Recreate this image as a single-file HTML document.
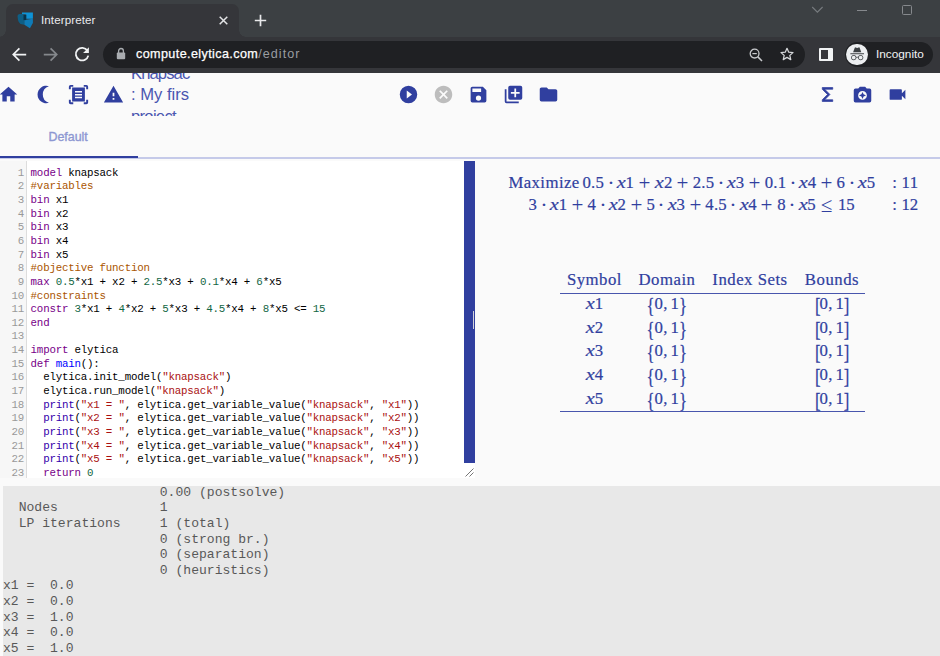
<!DOCTYPE html>
<html lang="en">
<head>
<meta charset="utf-8">
<title>Interpreter</title>
<style>
*{box-sizing:border-box;margin:0;padding:0}
html,body{width:940px;height:656px;overflow:hidden;background:#fafafa;font-family:"Liberation Sans",sans-serif}
.abs{position:absolute}
#stage{position:relative;width:940px;height:656px;overflow:hidden;background:#fafafa}
/* ---------- browser chrome ---------- */
#frame{left:0;top:0;width:940px;height:37px;background:#3c4043}
#tab{left:6px;top:4px;width:232.6px;height:34px;background:#35363a;border-radius:7px 7px 0 0}
#tabL{left:-1px;top:30px;width:7px;height:7px;background:radial-gradient(circle at 0 0,transparent 6.5px,#35363a 7px)}
#tabR{left:238.6px;top:30px;width:7px;height:7px;background:radial-gradient(circle at 100% 0,transparent 6.5px,#35363a 7px)}
#tabtitle{left:41px;top:13px;font-size:11.6px;line-height:14px;color:#e8eaed;letter-spacing:.1px;white-space:nowrap}
#toolbar{left:0;top:37px;width:940px;height:36px;background:#35363a}
#omni{left:103px;top:41px;width:702px;height:27px;border-radius:14px;background:#1f2023}
#url{left:136px;top:46.3px;font-size:12.6px;line-height:17px;color:#fff;white-space:nowrap;letter-spacing:.39px;-webkit-text-stroke:.25px #fff}
#url span{color:#9a9da1;letter-spacing:1.05px;-webkit-text-stroke:0}
#incog{left:845px;top:42px;width:88px;height:25px;border-radius:13px;background:#1f2023}
#incogtxt{left:876px;top:47px;font-size:11.8px;line-height:15px;color:#f1f3f4;white-space:nowrap}
/* ---------- app ---------- */
.ic{position:absolute;width:21px;height:21px;fill:#303f9f}
#title{left:131px;top:73px;width:62px;height:43px;overflow:hidden;color:#4a56b0;font-size:16.6px;line-height:21.3px;white-space:nowrap;letter-spacing:-.35px}
#title div{position:relative;top:-10px}
#tabtxt{left:48.5px;top:129px;font-size:12.4px;line-height:16px;color:#8d97d2;-webkit-text-stroke:.35px #8d97d2;white-space:nowrap}
#tabline{left:0;top:157.3px;width:940px;height:1.3px;background:#c5cae9}
#tabsel{left:0;top:155.8px;width:138px;height:2.2px;background:#303f9f}
/* editor */
#editor{left:0;top:161px;width:475px;height:317px;background:#fff;overflow:hidden}
#gutter{left:0;top:0;width:27px;height:317px;background:#f7f7f7;border-right:1px solid #ddd}
#bar{left:464px;top:161px;width:11px;height:302px;background:#303f9f}
#handle{left:473.2px;top:311px;width:1.2px;height:18px;background:#d4d4d8}
.ln{position:absolute;left:0;width:24px;text-align:right;color:#999;font:10.8px/13.64px "Liberation Mono",monospace;letter-spacing:-.21px;white-space:pre}
.cl{position:absolute;left:30.6px;color:#000;font:10.8px/13.64px "Liberation Mono",monospace;letter-spacing:-.21px;white-space:pre}
.k{color:#770088}.c{color:#aa5500}.n{color:#116644}.s{color:#aa1111}.d{color:#0000ff}.b{color:#3300aa}
/* output */
#out{left:3px;top:485.6px;width:937px;height:171px;background:#e8e8e8}
#outtxt{left:0;top:-.9px;color:#585858;font:13.07px/15.62px "Liberation Mono",monospace;white-space:pre}
#fade{left:0;top:478px;width:940px;height:7px;background:#fafafa}
/* math */
.m{position:absolute;color:#303f9f;font-family:"Liberation Serif",serif;font-size:16.75px;line-height:20px;white-space:nowrap}
.m{-webkit-text-stroke:.2px #303f9f}
.m i{font-style:italic;display:inline-block;transform:translateX(.4px) scaleX(1.2)}
.t.p{transform:translateY(1px) scale(1.26);transform-origin:50% 62%;-webkit-text-stroke:0}
.t.br{transform:translateY(1.2px) scaleY(1.3);transform-origin:50% 58%}
.t.cd{transform:scale(1.15);transform-origin:50% 66%}
.t{display:inline-block;text-align:center;white-space:nowrap;height:1em;vertical-align:top}
.hl{left:560.2px;width:304.4px;height:1px;background:#4855ad}
</style>
</head>
<body>
<div id="stage">
<div class="abs" id="frame"></div>
<div class="abs" id="tab"></div><div class="abs" id="tabL"></div><div class="abs" id="tabR"></div>
<svg class="abs" style="left:17px;top:11px" width="17" height="18" viewBox="0 0 17 18">
 <path d="M0.5 4.8 Q1 3.1 2.7 3.1 H6.1 L7.8 4.8 L7.4 13.8 L3.5 12.9 Q1.4 11.4 1 9.1 Z" fill="#0e5f86"/>
 <path d="M5 1.4 H15.9 V7.8 H9.3 V3.5 L5 2.9 Z" fill="#0e93d6"/>
 <path d="M7.4 9.1 L15.9 7.8 V12.1 L12.9 17.2 L7.4 13.8 Z" fill="#0f7cb8"/>
 <path d="M6.5 4 H9.1 V9.1 H6.5 Z" fill="#07344b"/>
</svg>
<div class="abs" id="tabtitle">Interpreter</div>
<svg class="abs" style="left:218px;top:15px" width="11" height="11" viewBox="0 0 11 11"><path d="M1.7 1.7 L9.3 9.3 M9.3 1.7 L1.7 9.3" stroke="#e3e4e6" stroke-width="1.5" fill="none"/></svg>
<svg class="abs" style="left:254px;top:14px" width="13" height="13" viewBox="0 0 13 13"><path d="M6.5 0.8 V12.2 M0.8 6.5 H12.2" stroke="#e8e9eb" stroke-width="1.7" fill="none"/></svg>
<svg class="abs" style="left:811px;top:6px" width="13" height="8" viewBox="0 0 13 8"><path d="M1.2 1 L6.4 6.2 L11.6 1" stroke="#777b7f" stroke-width="1.1" fill="none"/></svg>
<div class="abs" style="left:857px;top:9.5px;width:10px;height:1px;background:#86898d"></div>
<div class="abs" style="left:902px;top:5px;width:10px;height:10px;border:1px solid #86898d;border-radius:1.5px"></div>
<div class="abs" id="toolbar"></div>
<svg class="abs" style="left:11px;top:46px" width="17" height="17" viewBox="0 0 17 17"><path d="M15.2 8.5 H2.6 M8.4 2.4 L2.3 8.5 L8.4 14.6" stroke="#f1f3f4" stroke-width="1.75" fill="none"/></svg>
<svg class="abs" style="left:42px;top:46px" width="17" height="17" viewBox="0 0 17 17"><path d="M1.8 8.5 H14.4 M8.6 2.4 L14.7 8.5 L8.6 14.6" stroke="#85888c" stroke-width="1.75" fill="none"/></svg>
<svg class="abs" style="left:73px;top:45px" width="18" height="18" viewBox="0 0 18 18"><path d="M14.4 5.6 A6.3 6.3 0 1 0 15.3 10.6" stroke="#f1f3f4" stroke-width="1.8" fill="none"/><path d="M15.9 2.2 V8 H10.1 Z" fill="#f1f3f4"/></svg>
<div class="abs" id="omni"></div>
<svg class="abs" style="left:116px;top:47px" width="10" height="13" viewBox="0 0 10 13"><path d="M2.6 6 V3.9 A2.4 2.4 0 0 1 7.4 3.9 V6" stroke="#a9acb0" stroke-width="1.3" fill="none"/><rect x="0.8" y="5.6" width="8.4" height="6.6" rx="1" fill="#a9acb0"/></svg>
<div class="abs" id="url">compute.elytica.com<span>/editor</span></div>
<svg class="abs" style="left:749px;top:48px" width="14" height="14" viewBox="0 0 14 14"><circle cx="5.6" cy="5.6" r="4.4" stroke="#c9cbce" stroke-width="1.3" fill="none"/><path d="M8.9 8.9 L13 13" stroke="#c9cbce" stroke-width="1.5"/><path d="M3.4 5.6 H7.8" stroke="#c9cbce" stroke-width="1.2"/></svg>
<svg class="abs" style="left:780px;top:47px" width="14" height="14" viewBox="0 0 14 14"><path d="M7 1.3 L8.75 5.2 L13 5.6 L9.8 8.4 L10.75 12.6 L7 10.4 L3.25 12.6 L4.2 8.4 L1 5.6 L5.25 5.2 Z" stroke="#d5d7da" stroke-width="1.25" fill="none" stroke-linejoin="round"/></svg>
<div class="abs" style="left:819px;top:48px;width:14px;height:13px;border:2px solid #f1f3f4;border-right-width:5.5px;border-radius:1px"></div>
<div class="abs" id="incog"></div>
<div class="abs" style="left:846.4px;top:43.5px;width:21.6px;height:21.6px;border-radius:50%;background:#eceef0"></div>
<svg class="abs" style="left:849px;top:46px" width="16.4" height="16.4" viewBox="0 0 24 24"><path fill="#3c4043" d="M17.06 13c-1.86 0-3.42 1.33-3.82 3.1-.95-.41-1.82-.3-2.48-.01C10.350 14.310 8.790 13 6.940 13 4.770 13 3 14.790 3 17s1.770 4 3.940 4c2.060 0 3.740-1.620 3.900-3.680.34-.24 1.230-.69 2.320.02.180 2.050 1.840 3.660 3.900 3.660 2.170 0 3.940-1.790 3.940-4s-1.770-4-3.940-4M6.940 19.860c-1.560 0-2.810-1.280-2.810-2.860s1.260-2.860 2.810-2.860c1.560 0 2.810 1.280 2.810 2.860s-1.250 2.860-2.810 2.860m10.120 0c-1.560 0-2.810-1.280-2.810-2.860s1.250-2.860 2.810-2.860 2.820 1.280 2.820 2.860-1.270 2.860-2.820 2.860M22 10.500H2V12h20v-1.500m-6.470-7.870c-.22-.49-.78-.75-1.310-.58L12 2.790l-2.230-.74-.05-.01c-.53-.15-1.090.13-1.290.64L6 9h12l-2.440-6.320-.03-.05Z"/></svg>
<div class="abs" id="incogtxt">Incognito</div>

<svg class="ic" style="left:-1.75px;top:83.7px" viewBox="0 0 24 24"><path d="M10,20V14H14V20H19V12H22L12,3L2,12H5V20H10Z"/></svg>
<svg class="ic" style="left:33.25px;top:83.7px" viewBox="0 0 24 24"><path d="M2 12A10 10 0 0 0 15 21.54A10 10 0 0 1 15 2.46A10 10 0 0 0 2 12Z" transform="translate(3.2 0)"/></svg>
<svg class="ic" style="left:68.25px;top:83.7px" viewBox="0 0 24 24"><path d="M3 1H6V3.2H3.2V6H1V3A2 2 0 0 1 3 1ZM18 1H21A2 2 0 0 1 23 3V6H20.8V3.2H18ZM1 18H3.2V20.8H6V23H3A2 2 0 0 1 1 21ZM20.8 18H23V21A2 2 0 0 1 21 23H18V20.8H20.8ZM4.7 4H19.3V20H4.7ZM8 7.9V9.6H16V7.9ZM8 11.3V13H16V11.3ZM8 14.7V16.4H16V14.7Z" fill-rule="evenodd"/></svg>
<svg class="ic" style="left:103.25px;top:83.7px" viewBox="0 0 24 24"><path d="M13,14H11V10H13M13,18H11V16H13M1,21H23L12,2L1,21Z"/></svg>
<div class="abs" id="title"><div><span style="letter-spacing:-.9px">Knapsac</span><br><span style="letter-spacing:0">: My firs</span><br><span style="letter-spacing:-.7px">project</span></div></div>
<svg class="ic" style="left:397.7px;top:83.7px" viewBox="0 0 24 24"><path d="M10,16.5V7.5L16,12M12,2A10,10 0 0,0 2,12A10,10 0 0,0 12,22A10,10 0 0,0 22,12A10,10 0 0,0 12,2Z"/></svg>
<svg class="ic" style="left:432.8px;top:83.7px;fill:#bdbdbd" viewBox="0 0 24 24"><path d="M12,2C17.53,2 22,6.47 22,12C22,17.53 17.53,22 12,22C6.47,22 2,17.53 2,12C2,6.47 6.47,2 12,2M15.59,7L12,10.59L8.41,7L7,8.41L10.59,12L7,15.59L8.41,17L12,13.41L15.59,17L17,15.59L13.41,12L17,8.41L15.59,7Z"/></svg>
<svg class="ic" style="left:467.9px;top:83.7px" viewBox="0 0 24 24"><path d="M15,9H5V5H15M12,19A3,3 0 0,1 9,16A3,3 0 0,1 12,13A3,3 0 0,1 15,16A3,3 0 0,1 12,19M17,3H5C3.89,3 3,3.9 3,5V19A2,2 0 0,0 5,21H19A2,2 0 0,0 21,19V7L17,3Z"/></svg>
<svg class="ic" style="left:502.9px;top:83.7px" viewBox="0 0 24 24"><path d="M19,11H15V15H13V11H9V9H13V5H15V9H19M20,2H8A2,2 0 0,0 6,4V16A2,2 0 0,0 8,18H20A2,2 0 0,0 22,16V4A2,2 0 0,0 20,2M4,6H2V20A2,2 0 0,0 4,22H18V20H4V6Z"/></svg>
<svg class="ic" style="left:538.0px;top:83.7px" viewBox="0 0 24 24"><path d="M10,4H4C2.89,4 2,4.89 2,6V18A2,2 0 0,0 4,20H20A2,2 0 0,0 22,18V8C22,6.89 21.1,6 20,6H12L10,4Z"/></svg>
<svg class="ic" style="left:816.6px;top:83.7px" viewBox="0 0 24 24"><path d="M18,6H8.83L14.83,12L8.83,18H18V20H6V18L12,12L6,6V4H18V6Z" stroke="#303f9f" stroke-width=".8"/></svg>
<svg class="ic" style="left:851.7px;top:83.7px" viewBox="0 0 24 24"><path d="M9,3L7.17,5H4A2,2 0 0,0 2,7V19A2,2 0 0,0 4,21H20A2,2 0 0,0 22,19V7A2,2 0 0,0 20,5H16.83L15,3M12,18A5,5 0 0,1 7,13A5,5 0 0,1 12,8A5,5 0 0,1 17,13A5,5 0 0,1 12,18M12,17L13.25,14.25L16,13L13.25,11.75L12,9L10.75,11.75L8,13L10.75,14.25"/></svg>
<svg class="ic" style="left:887.0px;top:83.7px" viewBox="0 0 24 24"><path d="M17,10.5V7A1,1 0 0,0 16,6H4A1,1 0 0,0 3,7V17A1,1 0 0,0 4,18H16A1,1 0 0,0 17,17V13.5L21,17.5V6.5L17,10.5Z"/></svg>
<div class="abs" id="tabtxt">Default</div>
<div class="abs" id="tabline"></div>
<div class="abs" id="tabsel"></div>

<div class="abs" id="editor"><div class="abs" id="gutter"></div>
<div class="ln" style="top:5.80px">1</div><div class="cl" style="top:5.80px"><span class="k">model</span> knapsack</div>
<div class="ln" style="top:19.44px">2</div><div class="cl" style="top:19.44px"><span class="c">#variables</span></div>
<div class="ln" style="top:33.08px">3</div><div class="cl" style="top:33.08px"><span class="k">bin</span> x1</div>
<div class="ln" style="top:46.72px">4</div><div class="cl" style="top:46.72px"><span class="k">bin</span> x2</div>
<div class="ln" style="top:60.36px">5</div><div class="cl" style="top:60.36px"><span class="k">bin</span> x3</div>
<div class="ln" style="top:74.00px">6</div><div class="cl" style="top:74.00px"><span class="k">bin</span> x4</div>
<div class="ln" style="top:87.64px">7</div><div class="cl" style="top:87.64px"><span class="k">bin</span> x5</div>
<div class="ln" style="top:101.28px">8</div><div class="cl" style="top:101.28px"><span class="c">#objective function</span></div>
<div class="ln" style="top:114.92px">9</div><div class="cl" style="top:114.92px"><span class="k">max</span> <span class="n">0.5</span>*x1 + x2 + <span class="n">2.5</span>*x3 + <span class="n">0.1</span>*x4 + <span class="n">6</span>*x5</div>
<div class="ln" style="top:128.56px">10</div><div class="cl" style="top:128.56px"><span class="c">#constraints</span></div>
<div class="ln" style="top:142.20px">11</div><div class="cl" style="top:142.20px"><span class="k">constr</span> <span class="n">3</span>*x1 + <span class="n">4</span>*x2 + <span class="n">5</span>*x3 + <span class="n">4.5</span>*x4 + <span class="n">8</span>*x5 &lt;= <span class="n">15</span></div>
<div class="ln" style="top:155.84px">12</div><div class="cl" style="top:155.84px"><span class="k">end</span></div>
<div class="ln" style="top:169.48px">13</div><div class="cl" style="top:169.48px"></div>
<div class="ln" style="top:183.12px">14</div><div class="cl" style="top:183.12px"><span class="k">import</span> elytica</div>
<div class="ln" style="top:196.76px">15</div><div class="cl" style="top:196.76px"><span class="k">def</span> <span class="d">main</span>():</div>
<div class="ln" style="top:210.40px">16</div><div class="cl" style="top:210.40px">  elytica.init_model(<span class="s">&quot;knapsack&quot;</span>)</div>
<div class="ln" style="top:224.04px">17</div><div class="cl" style="top:224.04px">  elytica.run_model(<span class="s">&quot;knapsack&quot;</span>)</div>
<div class="ln" style="top:237.68px">18</div><div class="cl" style="top:237.68px">  <span class="b">print</span>(<span class="s">&quot;x1 = &quot;</span>, elytica.get_variable_value(<span class="s">&quot;knapsack&quot;</span>, <span class="s">&quot;x1&quot;</span>))</div>
<div class="ln" style="top:251.32px">19</div><div class="cl" style="top:251.32px">  <span class="b">print</span>(<span class="s">&quot;x2 = &quot;</span>, elytica.get_variable_value(<span class="s">&quot;knapsack&quot;</span>, <span class="s">&quot;x2&quot;</span>))</div>
<div class="ln" style="top:264.96px">20</div><div class="cl" style="top:264.96px">  <span class="b">print</span>(<span class="s">&quot;x3 = &quot;</span>, elytica.get_variable_value(<span class="s">&quot;knapsack&quot;</span>, <span class="s">&quot;x3&quot;</span>))</div>
<div class="ln" style="top:278.60px">21</div><div class="cl" style="top:278.60px">  <span class="b">print</span>(<span class="s">&quot;x4 = &quot;</span>, elytica.get_variable_value(<span class="s">&quot;knapsack&quot;</span>, <span class="s">&quot;x4&quot;</span>))</div>
<div class="ln" style="top:292.24px">22</div><div class="cl" style="top:292.24px">  <span class="b">print</span>(<span class="s">&quot;x5 = &quot;</span>, elytica.get_variable_value(<span class="s">&quot;knapsack&quot;</span>, <span class="s">&quot;x5&quot;</span>))</div>
<div class="ln" style="top:305.88px">23</div><div class="cl" style="top:305.88px">  <span class="k">return</span> <span class="n">0</span></div>
<svg class="abs" style="left:465px;top:307px" width="9" height="9" viewBox="0 0 9 9"><path d="M0.5 8.5 L8.5 0.5 M4.5 8.5 L8.5 4.5" stroke="#666" stroke-width="0.9" fill="none"/></svg>
</div><div class="abs" id="bar"></div><div class="abs" id="handle"></div>

<div class="m" style="left:508.4px;top:172.58px"><span class="t" style="letter-spacing:.42px">Maximize</span></div>
<div class="m" style="left:582.4px;top:172.58px"><span class="t" style="width:0.5em">0</span><span class="t" style="width:0.278em">.</span><span class="t" style="width:0.5em">5</span><span class="t" style="width:0.2222em"></span><span class="t cd" style="width:0.278em">·</span><span class="t" style="width:0.2222em"></span><span class="t x" style="width:0.572em"><i>x</i></span><span class="t" style="width:0.5em">1</span><span class="t" style="width:0.2222em"></span><span class="t p" style="width:0.778em">+</span><span class="t" style="width:0.2222em"></span><span class="t x" style="width:0.572em"><i>x</i></span><span class="t" style="width:0.5em">2</span><span class="t" style="width:0.2222em"></span><span class="t p" style="width:0.778em">+</span><span class="t" style="width:0.2222em"></span><span class="t" style="width:0.5em">2</span><span class="t" style="width:0.278em">.</span><span class="t" style="width:0.5em">5</span><span class="t" style="width:0.2222em"></span><span class="t cd" style="width:0.278em">·</span><span class="t" style="width:0.2222em"></span><span class="t x" style="width:0.572em"><i>x</i></span><span class="t" style="width:0.5em">3</span><span class="t" style="width:0.2222em"></span><span class="t p" style="width:0.778em">+</span><span class="t" style="width:0.2222em"></span><span class="t" style="width:0.5em">0</span><span class="t" style="width:0.278em">.</span><span class="t" style="width:0.5em">1</span><span class="t" style="width:0.2222em"></span><span class="t cd" style="width:0.278em">·</span><span class="t" style="width:0.2222em"></span><span class="t x" style="width:0.572em"><i>x</i></span><span class="t" style="width:0.5em">4</span><span class="t" style="width:0.2222em"></span><span class="t p" style="width:0.778em">+</span><span class="t" style="width:0.2222em"></span><span class="t" style="width:0.5em">6</span><span class="t" style="width:0.2222em"></span><span class="t cd" style="width:0.278em">·</span><span class="t" style="width:0.2222em"></span><span class="t x" style="width:0.572em"><i>x</i></span><span class="t" style="width:0.5em">5</span></div>
<div class="m" style="left:892.2px;top:172.58px"><span class="t" style="width:0.278em">:</span><span class="t" style="width:0.2778em"></span><span class="t" style="width:0.5em">1</span><span class="t" style="width:0.5em">1</span></div>
<div class="m" style="left:528.6px;top:195.48px"><span class="t" style="width:0.5em">3</span><span class="t" style="width:0.2222em"></span><span class="t cd" style="width:0.278em">·</span><span class="t" style="width:0.2222em"></span><span class="t x" style="width:0.572em"><i>x</i></span><span class="t" style="width:0.5em">1</span><span class="t" style="width:0.2222em"></span><span class="t p" style="width:0.778em">+</span><span class="t" style="width:0.2222em"></span><span class="t" style="width:0.5em">4</span><span class="t" style="width:0.2222em"></span><span class="t cd" style="width:0.278em">·</span><span class="t" style="width:0.2222em"></span><span class="t x" style="width:0.572em"><i>x</i></span><span class="t" style="width:0.5em">2</span><span class="t" style="width:0.2222em"></span><span class="t p" style="width:0.778em">+</span><span class="t" style="width:0.2222em"></span><span class="t" style="width:0.5em">5</span><span class="t" style="width:0.2222em"></span><span class="t cd" style="width:0.278em">·</span><span class="t" style="width:0.2222em"></span><span class="t x" style="width:0.572em"><i>x</i></span><span class="t" style="width:0.5em">3</span><span class="t" style="width:0.2222em"></span><span class="t p" style="width:0.778em">+</span><span class="t" style="width:0.2222em"></span><span class="t" style="width:0.5em">4</span><span class="t" style="width:0.278em">.</span><span class="t" style="width:0.5em">5</span><span class="t" style="width:0.2222em"></span><span class="t cd" style="width:0.278em">·</span><span class="t" style="width:0.2222em"></span><span class="t x" style="width:0.572em"><i>x</i></span><span class="t" style="width:0.5em">4</span><span class="t" style="width:0.2222em"></span><span class="t p" style="width:0.778em">+</span><span class="t" style="width:0.2222em"></span><span class="t" style="width:0.5em">8</span><span class="t" style="width:0.2222em"></span><span class="t cd" style="width:0.278em">·</span><span class="t" style="width:0.2222em"></span><span class="t x" style="width:0.572em"><i>x</i></span><span class="t" style="width:0.5em">5</span><span class="t" style="width:0.2778em"></span><span class="t p" style="width:0.778em">≤</span><span class="t" style="width:0.2778em"></span><span class="t" style="width:0.5em">1</span><span class="t" style="width:0.5em">5</span></div>
<div class="m" style="left:892.2px;top:195.48px"><span class="t" style="width:0.278em">:</span><span class="t" style="width:0.2778em"></span><span class="t" style="width:0.5em">1</span><span class="t" style="width:0.5em">2</span></div>
<div class="m" style="left:534.2px;width:120px;text-align:center;top:269.78px"><span class="t" style="letter-spacing:.5px;margin-right:-.5px">Symbol</span></div>
<div class="m" style="left:606.7px;width:120px;text-align:center;top:269.78px"><span class="t" style="letter-spacing:.5px;margin-right:-.5px">Domain</span></div>
<div class="m" style="left:689.7px;width:120px;text-align:center;top:269.78px"><span class="t" style="letter-spacing:.5px;margin-right:-.5px">Index Sets</span></div>
<div class="m" style="left:771.7px;width:120px;text-align:center;top:269.78px"><span class="t" style="letter-spacing:.5px;margin-right:-.5px">Bounds</span></div>
<div class="abs hl" style="top:292.5px"></div><div class="abs hl" style="top:410.8px"></div>
<div class="m" style="left:534.2px;width:120px;text-align:center;top:294.18px"><span class="t x" style="width:0.572em"><i>x</i></span><span class="t" style="width:0.5em">1</span></div>
<div class="m" style="left:606.7px;width:120px;text-align:center;top:294.18px"><span class="t br" style="width:0.5em">{</span><span class="t" style="width:0.5em">0</span><span class="t" style="width:0.278em">,</span><span class="t" style="width:0.1667em"></span><span class="t" style="width:0.5em">1</span><span class="t br" style="width:0.5em">}</span></div>
<div class="m" style="left:771.7px;width:120px;text-align:center;top:294.18px"><span class="t br" style="width:0.278em">[</span><span class="t" style="width:0.5em">0</span><span class="t" style="width:0.278em">,</span><span class="t" style="width:0.1667em"></span><span class="t" style="width:0.5em">1</span><span class="t br" style="width:0.278em">]</span></div>
<div class="m" style="left:534.2px;width:120px;text-align:center;top:317.78px"><span class="t x" style="width:0.572em"><i>x</i></span><span class="t" style="width:0.5em">2</span></div>
<div class="m" style="left:606.7px;width:120px;text-align:center;top:317.78px"><span class="t br" style="width:0.5em">{</span><span class="t" style="width:0.5em">0</span><span class="t" style="width:0.278em">,</span><span class="t" style="width:0.1667em"></span><span class="t" style="width:0.5em">1</span><span class="t br" style="width:0.5em">}</span></div>
<div class="m" style="left:771.7px;width:120px;text-align:center;top:317.78px"><span class="t br" style="width:0.278em">[</span><span class="t" style="width:0.5em">0</span><span class="t" style="width:0.278em">,</span><span class="t" style="width:0.1667em"></span><span class="t" style="width:0.5em">1</span><span class="t br" style="width:0.278em">]</span></div>
<div class="m" style="left:534.2px;width:120px;text-align:center;top:341.28px"><span class="t x" style="width:0.572em"><i>x</i></span><span class="t" style="width:0.5em">3</span></div>
<div class="m" style="left:606.7px;width:120px;text-align:center;top:341.28px"><span class="t br" style="width:0.5em">{</span><span class="t" style="width:0.5em">0</span><span class="t" style="width:0.278em">,</span><span class="t" style="width:0.1667em"></span><span class="t" style="width:0.5em">1</span><span class="t br" style="width:0.5em">}</span></div>
<div class="m" style="left:771.7px;width:120px;text-align:center;top:341.28px"><span class="t br" style="width:0.278em">[</span><span class="t" style="width:0.5em">0</span><span class="t" style="width:0.278em">,</span><span class="t" style="width:0.1667em"></span><span class="t" style="width:0.5em">1</span><span class="t br" style="width:0.278em">]</span></div>
<div class="m" style="left:534.2px;width:120px;text-align:center;top:364.88px"><span class="t x" style="width:0.572em"><i>x</i></span><span class="t" style="width:0.5em">4</span></div>
<div class="m" style="left:606.7px;width:120px;text-align:center;top:364.88px"><span class="t br" style="width:0.5em">{</span><span class="t" style="width:0.5em">0</span><span class="t" style="width:0.278em">,</span><span class="t" style="width:0.1667em"></span><span class="t" style="width:0.5em">1</span><span class="t br" style="width:0.5em">}</span></div>
<div class="m" style="left:771.7px;width:120px;text-align:center;top:364.88px"><span class="t br" style="width:0.278em">[</span><span class="t" style="width:0.5em">0</span><span class="t" style="width:0.278em">,</span><span class="t" style="width:0.1667em"></span><span class="t" style="width:0.5em">1</span><span class="t br" style="width:0.278em">]</span></div>
<div class="m" style="left:534.2px;width:120px;text-align:center;top:388.58px"><span class="t x" style="width:0.572em"><i>x</i></span><span class="t" style="width:0.5em">5</span></div>
<div class="m" style="left:606.7px;width:120px;text-align:center;top:388.58px"><span class="t br" style="width:0.5em">{</span><span class="t" style="width:0.5em">0</span><span class="t" style="width:0.278em">,</span><span class="t" style="width:0.1667em"></span><span class="t" style="width:0.5em">1</span><span class="t br" style="width:0.5em">}</span></div>
<div class="m" style="left:771.7px;width:120px;text-align:center;top:388.58px"><span class="t br" style="width:0.278em">[</span><span class="t" style="width:0.5em">0</span><span class="t" style="width:0.278em">,</span><span class="t" style="width:0.1667em"></span><span class="t" style="width:0.5em">1</span><span class="t br" style="width:0.278em">]</span></div>

<div class="abs" id="fade"></div>
<div class="abs" id="out"><div class="abs" id="outtxt">                    0.00 (postsolve)
  Nodes             1
  LP iterations     1 (total)
                    0 (strong br.)
                    0 (separation)
                    0 (heuristics)
x1 =  0.0
x2 =  0.0
x3 =  1.0
x4 =  0.0
x5 =  1.0</div></div>

</div>
</body>
</html>
